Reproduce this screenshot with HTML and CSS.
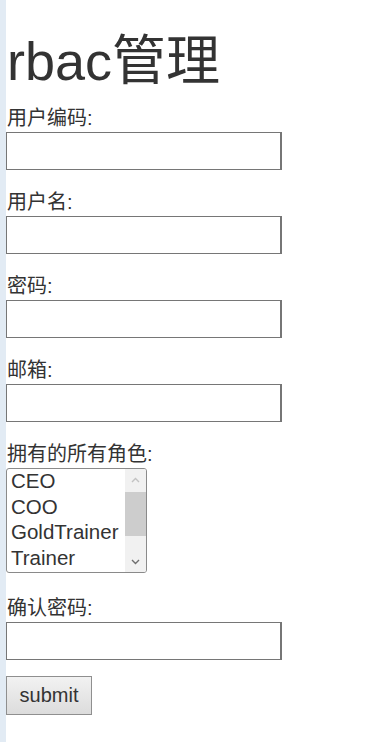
FILE: index.html
```html
<!DOCTYPE html>
<html>
<head>
<meta charset="utf-8">
<title>rbac管理</title>
<link rel="stylesheet" href="styles.css">
</head>
<body>
<div class="page">
  <h1 class="title">rbac管理</h1>
  <form class="form">
    <div class="field">
      <label class="label">用户编码:</label>
      <input class="input" type="text">
    </div>
    <div class="field">
      <label class="label">用户名:</label>
      <input class="input" type="text">
    </div>
    <div class="field">
      <label class="label">密码:</label>
      <input class="input" type="password">
    </div>
    <div class="field">
      <label class="label">邮箱:</label>
      <input class="input" type="text">
    </div>
    <div class="field">
      <label class="label">拥有的所有角色:</label>
      <div class="roles-wrap">
        <select class="roles" multiple size="4">
          <option>CEO</option>
          <option>COO</option>
          <option>GoldTrainer</option>
          <option>Trainer</option>
          <option>Member</option>
          <option>Guest</option>
        </select>
        <div class="scrollbar" aria-hidden="true">
          <div class="sb-btn">
            <svg width="9" height="6" viewBox="0 0 9 6"><path d="M1 5 L4.5 1.5 L8 5" fill="none" stroke="#c2c2c2" stroke-width="1.4"/></svg>
          </div>
          <div class="sb-thumb"></div>
          <div class="sb-space"></div>
          <div class="sb-btn">
            <svg width="9" height="6" viewBox="0 0 9 6"><path d="M1 1 L4.5 4.5 L8 1" fill="none" stroke="#6e6e6e" stroke-width="1.4"/></svg>
          </div>
        </div>
      </div>
    </div>
    <div class="field">
      <label class="label">确认密码:</label>
      <input class="input" type="password">
    </div>
    <button class="submit" type="button">submit</button>
  </form>
</div>
</body>
</html>
```
FILE: styles.css
```css
html, body {
  margin: 0;
  padding: 0;
  background: #ffffff;
}
body {
  font-family: "Liberation Sans", "Noto Sans CJK SC", sans-serif;
  color: #333333;
  min-height: 742px;
  border-left: 6px solid #e2ebf4;
}
.page {
  padding: 31px 0 20px 0;
}
.title {
  margin: 0 0 17px 1px;
  font-size: 54px;
  line-height: 60px;
  font-weight: normal;
  color: #333333;
}
.form {
  display: flex;
  flex-direction: column;
  align-items: flex-start;
}
.field {
  display: flex;
  flex-direction: column;
  align-items: flex-start;
  margin-bottom: 22px;
}
.label {
  font-size: 20px;
  line-height: 20px;
  padding-bottom: 4px;
  margin-left: 1px;
}
.input {
  box-sizing: border-box;
  width: 276px;
  height: 38px;
  margin: 0;
  border: 1px solid #767676;
  border-right-width: 2px;
  background: #fff;
  font-size: 18px;
}
.roles-wrap {
  position: relative;
  margin-bottom: 3px;
}
.roles {
  display: block;
  box-sizing: border-box;
  width: 141px;
  height: 105px;
  margin: 0;
  padding: 0;
  border: 1px solid #8a8a8a;
  border-radius: 3px;
  font-family: "Liberation Sans", sans-serif;
  font-size: 20.5px;
  color: #333333;
  overflow: hidden;
}
.roles option {
  padding: 0 4px 1px 4px;
  line-height: 22px;
}
.scrollbar {
  position: absolute;
  top: 1px;
  right: 1px;
  bottom: 1px;
  width: 21px;
  background: #f1f1f1;
  border-radius: 0 2px 2px 0;
  display: flex;
  flex-direction: column;
}
.sb-btn {
  height: 21px;
  display: flex;
  align-items: center;
  justify-content: center;
  flex: none;
}
.sb-thumb {
  margin-top: 2px;
  height: 44px;
  background: #cdcdcd;
  flex: none;
}
.sb-space {
  flex: 1;
}
.submit {
  box-sizing: border-box;
  margin-top: -6px;
  width: 86px;
  height: 39px;
  padding: 0;
  border: 1px solid #8f8f8f;
  border-radius: 0;
  background: linear-gradient(#f2f2f2, #dcdcdc);
  font-family: "Liberation Sans", sans-serif;
  font-size: 20px;
  color: #333333;
}
```
